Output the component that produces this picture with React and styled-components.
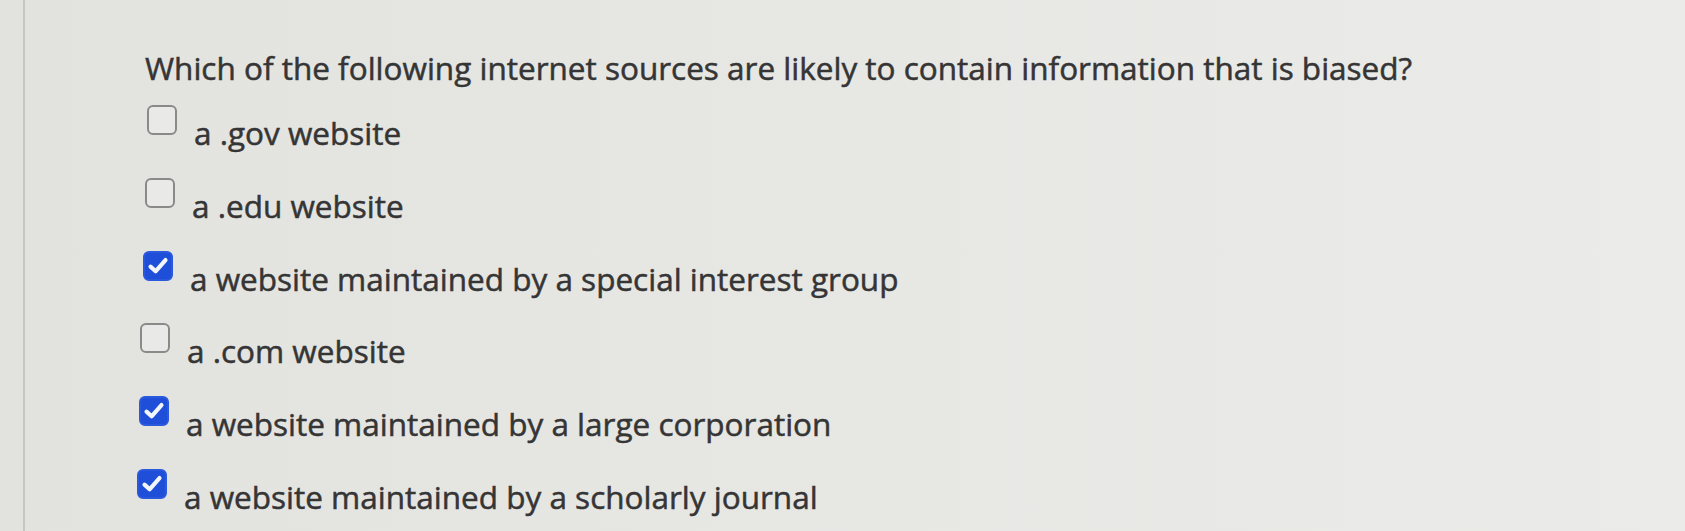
import React from 'react';
import styled, {createGlobalStyle} from 'styled-components';

const GlobalStyle = createGlobalStyle`
    html, body {
        margin: 0;
        padding: 0;
        background: #e5e5e2;
    }
    body {
        font-family: "Open Sans", "Liberation Sans", sans-serif;
    }
`

const Screen = styled.div`
    width: 1685px;
    height: 531px;
    overflow: hidden;
    background: linear-gradient(90deg, #e2e2df 0%, #e6e6e3 40%, #ebebe9 100%);
    display: flex;
`

const Gutter = styled.div`
    width: 23px;
    border-right: 2px solid #c6c6c3;
    flex: none;
`

const Question = styled.section`
    padding: 49px 0 0 120px;
    color: #353535;
`

const Prompt = styled.h2`
    margin: 0 0 18px 0;
    font-size: 31.5px;
    font-weight: 400;
    line-height: 38px;
    white-space: nowrap;
    -webkit-text-stroke: 0.5px #353535;
`

const OptionList = styled.ul`
    list-style: none;
    margin: 0;
    padding: 0;
    display: flex;
    flex-direction: column;
    gap: 42.8px;
`

const Option = styled.li`
    display: flex;
    align-items: flex-start;
    gap: 17px;
    height: 30px;
    margin-left: ${({shift}) => shift}px;
`

const Box = styled.span`
    box-sizing: border-box;
    width: 30px;
    height: 30px;
    flex: none;
    border-radius: 6px;
    display: flex;
    align-items: center;
    justify-content: center;
    ${({checked}) => checked
        ? 'background: #1f4fd8; border: 2px solid #2b59dd;'
        : 'background: #e9e9e7; border: 2.5px solid #8a8a8a;'}
`

const Label = styled.span`
    font-size: 31.5px;
    line-height: 38px;
    margin-top: 9px;
    white-space: nowrap;
    -webkit-text-stroke: 0.5px #353535;
`

const Check = () => (
    <svg width="22" height="20" viewBox="0 0 20 18">
        <path d="M3.2 9.6 L7.8 13.8 L16.8 3.6" fill="none" stroke="#f2f5fb" strokeWidth="3.8" strokeLinecap="round" strokeLinejoin="round"/>
    </svg>
)

const options = [
    {text: 'a .gov website', checked: false, shift: 2},
    {text: 'a .edu website', checked: false, shift: 0},
    {text: 'a website maintained by a special interest group', checked: true, shift: -2},
    {text: 'a .com website', checked: false, shift: -5},
    {text: 'a website maintained by a large corporation', checked: true, shift: -6},
    {text: 'a website maintained by a scholarly journal', checked: true, shift: -8},
];

const App = () => {
    return <React.Fragment>
        <GlobalStyle/>
        <Screen>
            <Gutter/>
            <Question>
                <Prompt>Which of the following internet sources are likely to contain information that is biased?</Prompt>
                <OptionList>
                    {options.map((o) => (
                        <Option key={o.text} shift={o.shift}>
                            <Box checked={o.checked}>{o.checked && <Check/>}</Box>
                            <Label>{o.text}</Label>
                        </Option>
                    ))}
                </OptionList>
            </Question>
        </Screen>
    </React.Fragment>
}

export default App;
